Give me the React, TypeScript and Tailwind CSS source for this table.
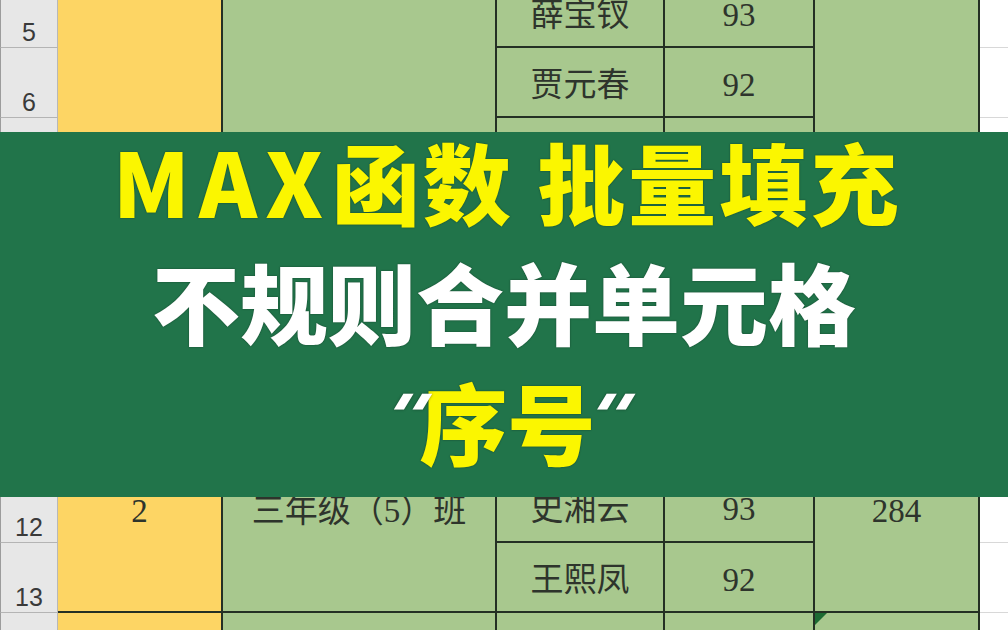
const cellFont = { fontFamily: '"Liberation Serif", "Noto Sans CJK SC", serif' };

type Row = { n: number; name?: string; score?: string };

const rows: Row[] = [
	{ n: 5, name: '薛宝钗', score: '93' },
	{ n: 6, name: '贾元春', score: '92' },
	{ n: 7 },
	{ n: 8 },
	{ n: 9 },
	{ n: 10 },
	{ n: 11 },
	{ n: 12, name: '史湘云', score: '93' },
	{ n: 13, name: '王熙凤', score: '92' },
	{ n: 14 },
];

const line = 'border-r-2 border-b-2 border-[#243024]';

function Sheet() {
	return (
		<div
			className="-mt-[23px] grid grid-cols-[58px_165px_274px_168px_150px_165px_1fr] grid-rows-[repeat(10,70.7px)] text-[33px] text-[#2e342c]"
			style={cellFont}
		>
			{rows.map((r, i) => (
				<div
					key={'h' + r.n}
					className="col-start-1 flex items-end justify-center border-b border-r border-l border-b-[#b4b4b4] border-r-[#b8b8b8] border-l-[#9c9c9c] bg-[#e7e7e7] pb-[2px] text-[25px] leading-none text-[#3a3a3a]"
					style={{ gridRowStart: i + 1, fontFamily: '"Liberation Sans", sans-serif' }}
				>
					{r.n}
				</div>
			))}

			{/* serial number */}
			<div className={`col-start-2 row-start-1 row-span-6 bg-[#fdd564] ${line}`} />
			<div className={`col-start-2 row-start-7 row-span-3 flex items-center justify-center bg-[#fdd564] pt-[12px] ${line}`}>
				2
			</div>
			<div className={`col-start-2 row-start-10 bg-[#fdd564] ${line}`} />

			{/* class */}
			<div className={`col-start-3 row-start-1 row-span-6 bg-[#a8c88e] ${line}`} />
			<div className={`col-start-3 row-start-7 row-span-3 flex items-center justify-center bg-[#a8c88e] pt-[12px] ${line}`}>
				三年级（5）班
			</div>
			<div className={`col-start-3 row-start-10 bg-[#a8c88e] ${line}`} />

			{/* names + scores */}
			{rows.map((r, i) => (
				<div
					key={'n' + r.n}
					className={`col-start-4 flex items-center justify-center bg-[#a8c88e] pt-[8px] ${line}`}
					style={{ gridRowStart: i + 1 }}
				>
					{r.name}
				</div>
			))}
			{rows.map((r, i) => (
				<div
					key={'s' + r.n}
					className={`col-start-5 flex items-center justify-center bg-[#a8c88e] pt-[8px] ${line}`}
					style={{ gridRowStart: i + 1 }}
				>
					{r.score}
				</div>
			))}

			{/* total */}
			<div className={`col-start-6 row-start-1 row-span-6 bg-[#a8c88e] ${line}`} />
			<div className={`col-start-6 row-start-7 row-span-3 flex items-center justify-center bg-[#a8c88e] pt-[12px] ${line}`}>
				284
			</div>
			<div className={`relative col-start-6 row-start-10 bg-[#a8c88e] ${line}`}>
				<svg className="absolute left-0 top-0" width="12" height="12" viewBox="0 0 12 12">
					<polygon points="0,0 12,0 0,12" fill="#1d6b33" />
				</svg>
			</div>

			{/* empty column */}
			{rows.map((r, i) => (
				<div
					key={'e' + r.n}
					className="col-start-7 border-b border-[#d8d8d8] bg-white"
					style={{ gridRowStart: i + 1 }}
				/>
			))}
		</div>
	);
}

const quoteFont = { fontFamily: '"DejaVu Sans", sans-serif' };

export default function App() {
	return (
		<div className="relative h-[630px] w-[1008px] overflow-hidden bg-white">
			<Sheet />
			<div
				className="absolute left-0 right-0 top-[132px] flex h-[365px] flex-col items-center justify-center bg-[#21744a] pb-[30px] text-[88px] font-black leading-[120px] [text-shadow:0_0_2px_rgba(0,0,0,0.45)]"
				style={{ fontFamily: '"Noto Sans CJK SC", sans-serif' }}
			>
				<div className="pl-[6px] tracking-[3px] text-[#fbf600]">
					<span className="tracking-[9px]">MAX</span>函数 批量填充
				</div>
				<div className="text-white">不规则合并单元格</div>
				<div className="flex items-start pl-[6px]">
					<span
						className="mt-[27px] inline-block w-[30px] -skew-x-[22deg] scale-x-150 text-center text-[58px] leading-none font-bold text-white"
						style={quoteFont}
					>
						"
					</span>
					<span className="text-[#fbf600]">序号</span>
					<span
						className="-ml-[6px] mt-[27px] inline-block w-[35px] -skew-x-[22deg] scale-x-150 text-center text-[58px] leading-none font-bold text-white"
						style={quoteFont}
					>
						"
					</span>
				</div>
			</div>
		</div>
	);
}
